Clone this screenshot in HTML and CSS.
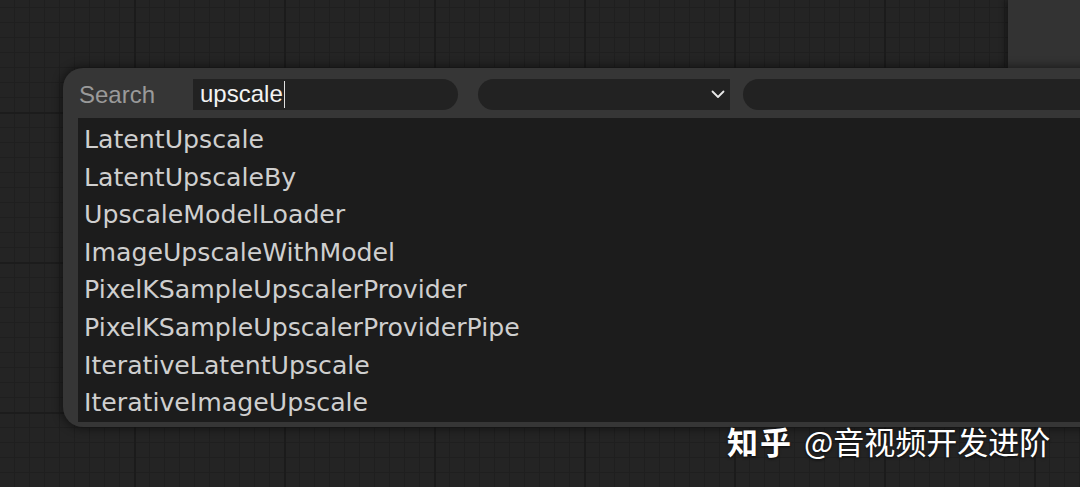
FILE: index.html
```html
<!DOCTYPE html>
<html lang="zh">
<head>
<meta charset="utf-8">
<title>Search</title>
<link rel="stylesheet" href="styles.css">
</head>
<body>
<div class="canvas">
  <div class="node-block"></div>
  <div class="dialog">
    <div class="header">
      <span class="label">Search</span>
      <div class="input input-main"><span class="typed">upscale</span><span class="caret"></span></div>
      <div class="select">
        <svg class="chev" width="14" height="9" viewBox="0 0 14 9"><path d="M1.5 1.5 L7 7 L12.5 1.5" fill="none" stroke="#e8e8e8" stroke-width="1.8" stroke-linecap="round" stroke-linejoin="round"/></svg>
      </div>
      <div class="input input-extra"></div>
    </div>
    <div class="list">
      <div class="item">LatentUpscale</div>
      <div class="item">LatentUpscaleBy</div>
      <div class="item">UpscaleModelLoader</div>
      <div class="item">ImageUpscaleWithModel</div>
      <div class="item">PixelKSampleUpscalerProvider</div>
      <div class="item">PixelKSampleUpscalerProviderPipe</div>
      <div class="item">IterativeLatentUpscale</div>
      <div class="item">IterativeImageUpscale</div>
    </div>
  </div>
  <div class="watermark"><b class="brand">知乎</b> @音视频开发进阶</div>
</div>
</body>
</html>
```

FILE: styles.css
```css
html, body {
  margin: 0;
  padding: 0;
  width: 1080px;
  height: 487px;
  overflow: hidden;
}

body {
  background-color: #242424;
  background-image:
    linear-gradient(to right, #1b1b1b 2px, transparent 2px),
    linear-gradient(to bottom, #1c1c1c 2px, transparent 2px),
    linear-gradient(to right, #1f1f1f 1px, transparent 1px),
    linear-gradient(to bottom, #1f1f1f 1px, transparent 1px);
  background-size: 150px 150px, 150px 150px, 15px 15px, 15px 15px;
  background-position: 134px 0, 0 112px, 14px 0, 0 7px;
  font-family: "Liberation Sans", Arial, sans-serif;
}

.canvas {
  position: relative;
  width: 1080px;
  height: 487px;
}

.node-block {
  position: absolute;
  left: 1008px;
  top: 0;
  width: 90px;
  height: 68px;
  background: #333333;
  box-shadow: -3px 0 6px rgba(0, 0, 0, 0.35);
}

.dialog {
  position: absolute;
  left: 63px;
  top: 68px;
  width: 1060px;
  height: 359px;
  background: #363636;
  border-radius: 20px;
  box-shadow: 0 0 10px 2px rgba(0, 0, 0, 0.45);
  display: flex;
  flex-direction: column;
  padding: 0 0 5px 15px;
  box-sizing: border-box;
}

.header {
  height: 50px;
  display: flex;
  align-items: center;
  padding-top: 2px;
  box-sizing: border-box;
}

.label {
  font-size: 24px;
  color: #9a9a9a;
  margin-left: 1px;
  width: 114px;
  position: relative;
  top: 1px;
}

.input {
  height: 31px;
  background: #222222;
  box-sizing: border-box;
  display: flex;
  align-items: center;
}

.input-main {
  width: 265px;
  border-radius: 0 16px 16px 0;
  padding-left: 7px;
  font-size: 24px;
  color: #f2f2f2;
}

.caret {
  display: inline-block;
  width: 1.5px;
  height: 27px;
  background: #e0e0e0;
  margin-left: 1px;
}

.select {
  width: 252px;
  height: 31px;
  margin-left: 20px;
  background: #222222;
  border-radius: 16px 0 0 16px;
  display: flex;
  align-items: center;
  justify-content: flex-end;
  padding-right: 5px;
  box-sizing: border-box;
}

.chev {
  display: block;
  margin-top: 1px;
}

.input-extra {
  flex: 1;
  margin-left: 13px;
  border-radius: 16px 0 0 16px;
}

.list {
  flex: 1;
  background: #1c1c1c;
  padding: 3px 0 0 6px;
  box-sizing: border-box;
  font-family: "DejaVu Sans", Verdana, sans-serif;
  font-size: 25.2px;
  color: #cfcfcf;
}

.item {
  height: 37.6px;
  line-height: 37.6px;
  white-space: nowrap;
}

.watermark {
  position: absolute;
  left: 727px;
  top: 420px;
  font-family: "Noto Sans CJK SC", sans-serif;
  font-size: 31px;
  line-height: 42px;
  color: #ffffff;
  text-shadow: 0 1px 3px rgba(0, 0, 0, 0.8);
  white-space: nowrap;
}

.brand {
  font-weight: 700;
  letter-spacing: 2px;
  margin-right: 4px;
}
```
